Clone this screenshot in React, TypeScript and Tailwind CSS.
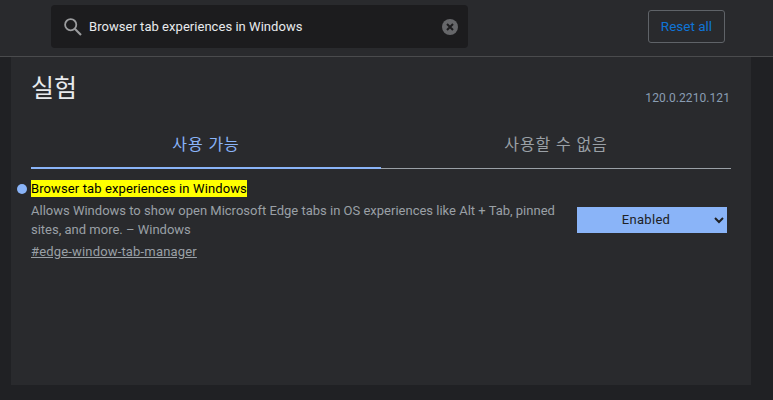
export default function App() {
  return (
    <div className="h-[400px] w-[773px] overflow-hidden bg-[#202124] font-['Roboto','Noto_Sans_CJK_KR',sans-serif]">
      <header className="flex h-[57px] items-start border-b border-[#4a4b4d] bg-[#292a2d]">
        <div className="ml-[51px] mt-[5px] flex h-[43px] w-[417px] items-center rounded-[4px] bg-[#1c1c1e] pl-[13px] pr-[10px]">
          <svg width="18" height="18" viewBox="0 0 18 18" fill="none" stroke="#9b9c9e" className="shrink-0">
            <circle cx="6.7" cy="6.7" r="5.6" strokeWidth="1.8" />
            <path d="M10.8 10.8l6.2 6.2" strokeWidth="2.1" />
          </svg>
          <span className="ml-[7px] flex-1 text-[13px] leading-[20px] tracking-[0.04px] text-[#e8eaed]">Browser tab experiences in Windows</span>
          <svg width="16" height="16" viewBox="0 0 16 16" className="shrink-0">
            <circle cx="8" cy="8" r="8" fill="#66676a" />
            <path d="M5 5l6 6M11 5l-6 6" stroke="#1c1c1e" strokeWidth="2" />
          </svg>
        </div>
        <button className="ml-[180px] mt-[10px] flex h-[33px] w-[77px] items-center justify-center rounded-[3px] border border-[#5f6368] text-[13.5px] text-[#0f74d6]">
          Reset all
        </button>
      </header>
      <main className="mx-[11px] h-[328px] w-[740px] bg-[#292a2d] px-[20px]">
        <div className="flex h-[75px] items-start justify-between">
          <h1 className="mt-[14px] text-[25px] leading-[36px] font-normal text-[#e8eaed]">실험</h1>
          <span className="mr-[1px] mt-[32px] text-[12px] leading-[18px] tracking-[0.07px] text-[#8a9db3]">120.0.2210.121</span>
        </div>
        <div className="flex h-[37px] border-b border-[#9aa0a6]">
          <div className="-mb-[1px] w-[350px] border-b-2 border-[#8ab4f8] pt-[1px] text-center text-[16px] leading-[24px] tracking-[0.9px] text-[#8ab4f8]">사용 가능</div>
          <div className="flex-1 pt-[1px] text-center text-[16px] leading-[24px] tracking-[0.9px] text-[#9aa0a6]">사용할 수 없음</div>
        </div>
        <div className="relative flex items-start justify-between pt-[11px]">
          <span className="absolute -left-[14px] top-[15px] h-[10px] w-[10px] rounded-full bg-[#8ab4f8]" />
          <div className="w-[530px]">
            <div className="h-[17px] text-[13px] leading-[17px]">
              <mark className="inline-block bg-[#ffff00] tracking-[0.11px] text-black">Browser tab experiences in Windows</mark>
            </div>
            <p className="mt-[4px] text-[13px] leading-[19px] text-[#9aa0a6]">
              Allows Windows to show open Microsoft Edge tabs in OS experiences like Alt + Tab, pinned sites, and more. – Windows
            </p>
            <a className="mt-[3px] block text-[13px] leading-[20px] tracking-[0.17px] text-[#9aa0a6] underline">#edge-window-tab-manager</a>
          </div>
          <div className="relative mr-[4px] mt-[27px] flex h-[26px] w-[150px] items-center justify-center bg-[#8ab4f8] text-[13px] text-[#202124]">
            <span className="-ml-[12px] tracking-[0.3px]">Enabled</span>
            <svg width="10" height="7" viewBox="0 0 10 7" fill="none" stroke="#202124" strokeWidth="2" className="absolute right-[3px] top-[10px]">
              <path d="M1 1l4 4 4-4" />
            </svg>
          </div>
        </div>
      </main>
    </div>
  );
}
